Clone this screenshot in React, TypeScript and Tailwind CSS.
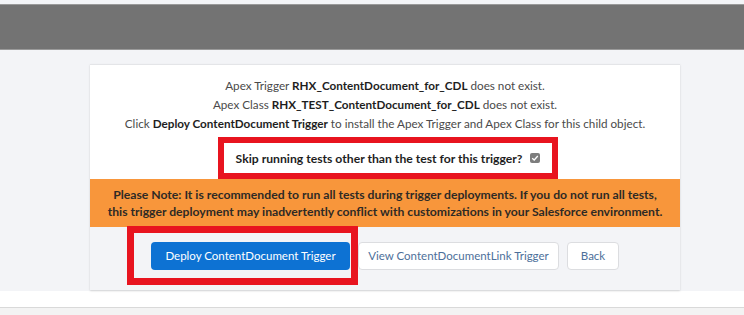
export default function App() {
  const font = { fontFamily: 'Lato, "Open Sans", sans-serif' }

  return (
    <div className="w-[744px] h-[315px] overflow-hidden bg-[#f3f4f7] whitespace-nowrap" style={font}>
      {/* Kopfleiste */}
      <div className="h-[4px] bg-[#f3f4f7]" />
      <div className="h-[46px] bg-[#737373] border-y border-[#9a9a9a]" />

      {/* Inhalt */}
      <div className="pt-[14px] pl-[90px]">
        <div className="relative w-[590px] border-t border-[#e4e5e8] shadow-[0_1px_2px_rgba(0,0,0,0.15)]">
          <div className="bg-white pt-[11px] text-center text-[11.7px] leading-[19px] text-[#4a4a4a]">
            <p>
              Apex Trigger <b className="text-[#1e1e1e]">RHX_ContentDocument_for_CDL</b> does not exist.
            </p>
            <p>
              Apex Class <b className="text-[#1e1e1e]">RHX_TEST_ContentDocument_for_CDL</b> does not exist.
            </p>
            <p>
              Click <b className="text-[#1e1e1e]">Deploy ContentDocument Trigger</b> to install the Apex Trigger and Apex Class for this child object.
            </p>
            <div className="flex justify-center pt-[4px] pl-[6px]">
              <div className="flex items-center gap-[8px] h-[42px] w-[340px] justify-center border-[6px] border-[#e8141f] text-[12.2px] font-bold text-[#1e1e1e]">
                <span>Skip running tests other than the test for this trigger?</span>
                <span className="w-[10px] h-[10px] rounded-[2px] bg-[#7d7d7d] flex items-center justify-center">
                  <svg viewBox="0 0 10 10" className="w-[8px] h-[8px]">
                    <path d="M1.5 5.2 L4 7.5 L8.5 2.5" stroke="white" strokeWidth="1.6" fill="none" />
                  </svg>
                </span>
              </div>
            </div>
          </div>

          <div className="bg-[#f8963b] py-[7px] text-center text-[12.2px] leading-[17px] font-bold text-[#2e2a25]">
            <p>Please Note: It is recommended to run all tests during trigger deployments. If you do not run all tests,</p>
            <p>this trigger deployment may inadvertently conflict with customizations in your Salesforce environment.</p>
          </div>

          <div className="h-[63px] flex items-start pt-[15px] pl-[61px] gap-[8px] text-[11.5px]">
            <button className="h-[28px] w-[199px] rounded-[4px] bg-[#0d72d3] text-white">
              Deploy ContentDocument Trigger
            </button>
            <button className="h-[28px] w-[201px] rounded-[4px] bg-white border border-[#dcdde0] text-[#4d6f9a]">
              View ContentDocumentLink Trigger
            </button>
            <button className="h-[28px] w-[52px] rounded-[4px] bg-white border border-[#dcdde0] text-[#4d6f9a]">
              Back
            </button>
          </div>

          {/* rote Markierung */}
          <div className="absolute left-[37px] top-[161px] w-[231px] h-[59px] border-[7px] border-[#e8141f]" />
        </div>
      </div>

      <div className="mt-[1px] h-[17px] bg-white border-b border-[#d9d9d9]" />
      <div className="h-[10px] bg-[#f3f3f3]" />
    </div>
  )
}
